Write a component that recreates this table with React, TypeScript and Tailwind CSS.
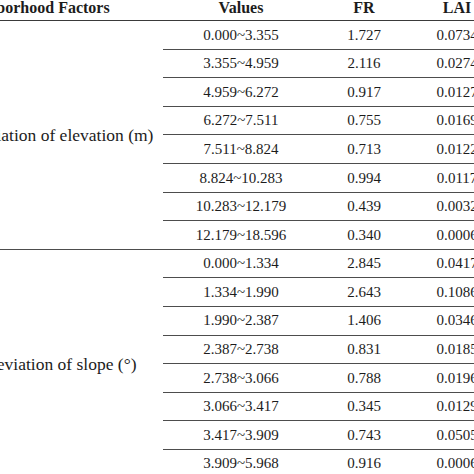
const groups = [
  {
    label: 'Standard deviation of elevation (m)',
    rows: [
      ['0.000', '3.355', '1.727', '0.0734'],
      ['3.355', '4.959', '2.116', '0.0274'],
      ['4.959', '6.272', '0.917', '0.0127'],
      ['6.272', '7.511', '0.755', '0.0169'],
      ['7.511', '8.824', '0.713', '0.0122'],
      ['8.824', '10.283', '0.994', '0.0117'],
      ['10.283', '12.179', '0.439', '0.0032'],
      ['12.179', '18.596', '0.340', '0.0006'],
    ],
  },
  {
    label: 'Standard deviation of slope (°)',
    rows: [
      ['0.000', '1.334', '2.845', '0.0417'],
      ['1.334', '1.990', '2.643', '0.1086'],
      ['1.990', '2.387', '1.406', '0.0346'],
      ['2.387', '2.738', '0.831', '0.0185'],
      ['2.738', '3.066', '0.788', '0.0196'],
      ['3.066', '3.417', '0.345', '0.0129'],
      ['3.417', '3.909', '0.743', '0.0505'],
      ['3.909', '5.968', '0.916', '0.0006'],
    ],
  },
];

const cell = 'flex items-center justify-center whitespace-nowrap border-b border-[#4d4d4d]';
const head = 'flex items-center justify-center whitespace-nowrap border-b-[1.5px] border-[#3a3a3a] font-bold text-[16px] pt-[3px]';

export default function App() {
  return (
    <div
      className="w-[474px] h-[474px] overflow-hidden bg-white text-[#1c1c1c]"
      style={{ fontFamily: '"Liberation Serif", "Times New Roman", serif' }}
    >
      <div className="grid grid-cols-[260px_156px_90px_96px] auto-rows-[28.6px] w-max ml-[-97px] mt-[-7.6px]">
        {/* header */}
        <div className={head}>Neighborhood Factors</div>
        <div className={head}>Values</div>
        <div className={head}>FR</div>
        <div className={head}>LAI</div>

        {groups.map((g) => (
          <>
            <div key={g.label} className={`${cell} row-span-8 col-start-1 pr-[8px] text-[17.5px]`}>
              {g.label}
            </div>
            {g.rows.map((r) => (
              <>
                <div key={`${g.label}-${r[0]}-v`} className={`${cell} col-start-2 text-[15px]`}>
                  {`${r[0]}~${r[1]}`}
                </div>
                <div key={`${g.label}-${r[0]}-f`} className={`${cell} text-[15px]`}>{r[2]}</div>
                <div key={`${g.label}-${r[0]}-l`} className={`${cell} text-[15px]`}>{r[3]}</div>
              </>
            ))}
          </>
        ))}
      </div>
    </div>
  );
}
